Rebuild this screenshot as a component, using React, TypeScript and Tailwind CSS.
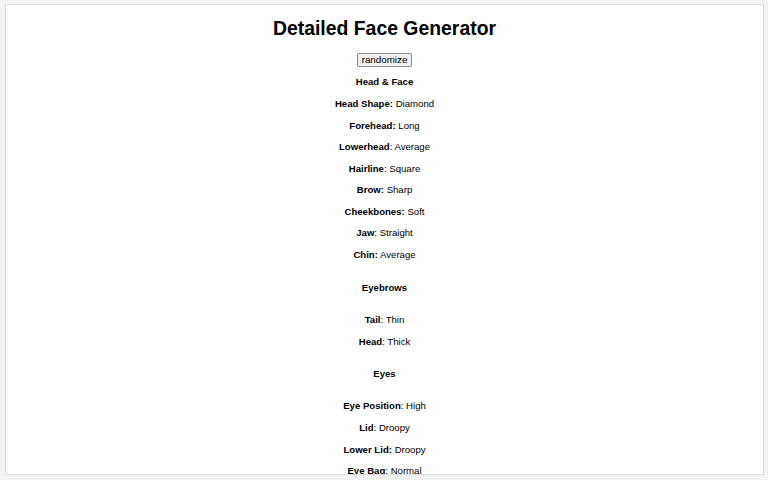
import React from "react";

type Row = { label: string; value: string; boldColon?: boolean; mt: number };
type Section = { title: string; mt: number; rows: Row[] };

const sections: Section[] = [
  {
    title: "Head & Face",
    mt: 9,
    rows: [
      { label: "Head Shape", value: "Diamond", boldColon: true, mt: 10.5 },
      { label: "Forehead", value: "Long", boldColon: true, mt: 10 },
      { label: "Lowerhead", value: "Average", mt: 10 },
      { label: "Hairline", value: "Square", mt: 10 },
      { label: "Brow", value: "Sharp", boldColon: true, mt: 10 },
      { label: "Cheekbones", value: "Soft", boldColon: true, mt: 10 },
      { label: "Jaw", value: "Straight", mt: 10 },
      { label: "Chin", value: "Average", boldColon: true, mt: 10 },
    ],
  },
  {
    title: "Eyebrows",
    mt: 21.5,
    rows: [
      { label: "Tail", value: "Thin", mt: 20.5 },
      { label: "Head", value: "Thick", mt: 10.5 },
    ],
  },
  {
    title: "Eyes",
    mt: 20.5,
    rows: [
      { label: "Eye Position", value: "High", mt: 20.5 },
      { label: "Lid", value: "Droopy", mt: 10.5 },
      { label: "Lower Lid", value: "Droopy", boldColon: true, mt: 10.5 },
      { label: "Eye Bag", value: "Normal", mt: 10 },
    ],
  },
];

export default function App() {
  return (
    <div
      className="h-[480px] w-[768px] overflow-hidden bg-[#f3f3f3] pt-[4px] pl-[5px]"
      style={{ fontFamily: '"Liberation Sans", Arial, sans-serif' }}
    >
      <div className="flex h-[471px] w-[759px] flex-col items-center overflow-hidden border border-[#dcdcdc] bg-white text-black">
        <h1 className="mt-[11px] text-[19.4px] font-bold leading-[24px]">Detailed Face Generator</h1>
        <button className="mt-[13px] h-[14px] rounded-[2px] border border-[#8f8f8f] bg-[#efefef] px-[4px] text-[9.8px] leading-[12px] text-black">
          randomize
        </button>
        {sections.map((s) => (
          <React.Fragment key={s.title}>
            <div className="text-[9.6px] font-bold leading-[11.5px]" style={{ marginTop: s.mt }}>
              {s.title}
            </div>
            {s.rows.map((r) => (
              <div
                key={r.label}
                className="shrink-0 text-[9.6px] leading-[11.5px]"
                style={{ marginTop: r.mt }}
              >
                <span className="font-bold">
                  {r.label}
                  {r.boldColon ? ":" : ""}
                </span>
                {r.boldColon ? " " : ": "}
                {r.value}
              </div>
            ))}
          </React.Fragment>
        ))}
      </div>
    </div>
  );
}
